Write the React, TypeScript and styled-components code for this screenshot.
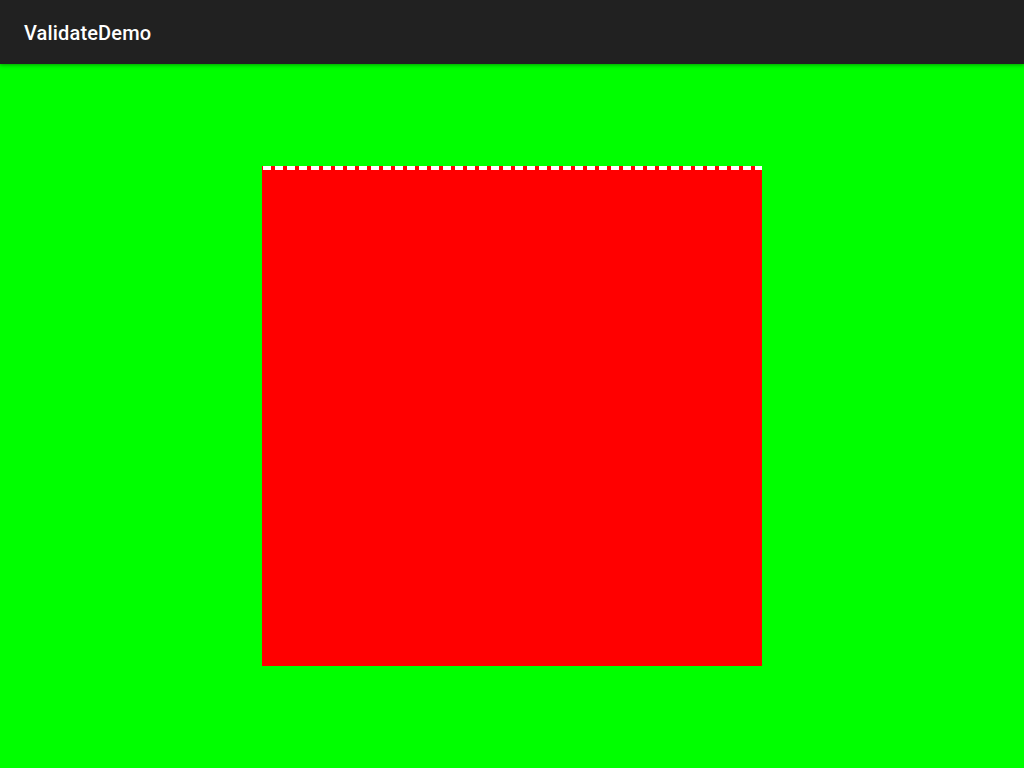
import React from 'react';
import styled, { createGlobalStyle } from 'styled-components';

const GlobalStyle = createGlobalStyle`
  html, body {
    margin: 0;
    padding: 0;
    height: 100%;
  }
  body {
    font-family: Roboto, "Noto Sans", sans-serif;
    background: #00ff00;
  }
  #root {
    height: 100%;
  }
`;

const Page = styled.div`
  display: flex;
  flex-direction: column;
  height: 100vh;
  background: #00ff00;
`;

const AppBar = styled.header`
  height: 64px;
  flex-shrink: 0;
  display: flex;
  align-items: center;
  padding: 0 24px;
  background: #212121;
  color: #ffffff;
  box-shadow: 0 2px 4px rgba(0, 0, 0, 0.2), 0 1px 2px rgba(0, 0, 0, 0.14);
  position: relative;
  z-index: 1;
`;

const Title = styled.h1`
  margin: 2px 0 0;
  font-size: 20px;
  font-weight: 500;
  letter-spacing: 0.15px;
`;

const Content = styled.main`
  flex: 1;
  padding-top: 102px;
  display: flex;
  justify-content: center;
  align-items: flex-start;
`;

// red square with a dashed white strip along its top edge
const Square = styled.div<{ $size: number }>`
  box-sizing: border-box;
  width: ${({ $size }) => $size}px;
  height: ${({ $size }) => $size}px;
  background:
    repeating-linear-gradient(90deg, #ffffff 0 8px, transparent 8px 12px) 1px 0 / 100% 4px no-repeat,
    #ff0000;
`;

const App: React.FC = () => {
  return (
    <>
      <GlobalStyle />
      <Page>
        <AppBar>
          <Title>ValidateDemo</Title>
        </AppBar>
        <Content>
          <Square $size={500} />
        </Content>
      </Page>
    </>
  );
};

export default App;
